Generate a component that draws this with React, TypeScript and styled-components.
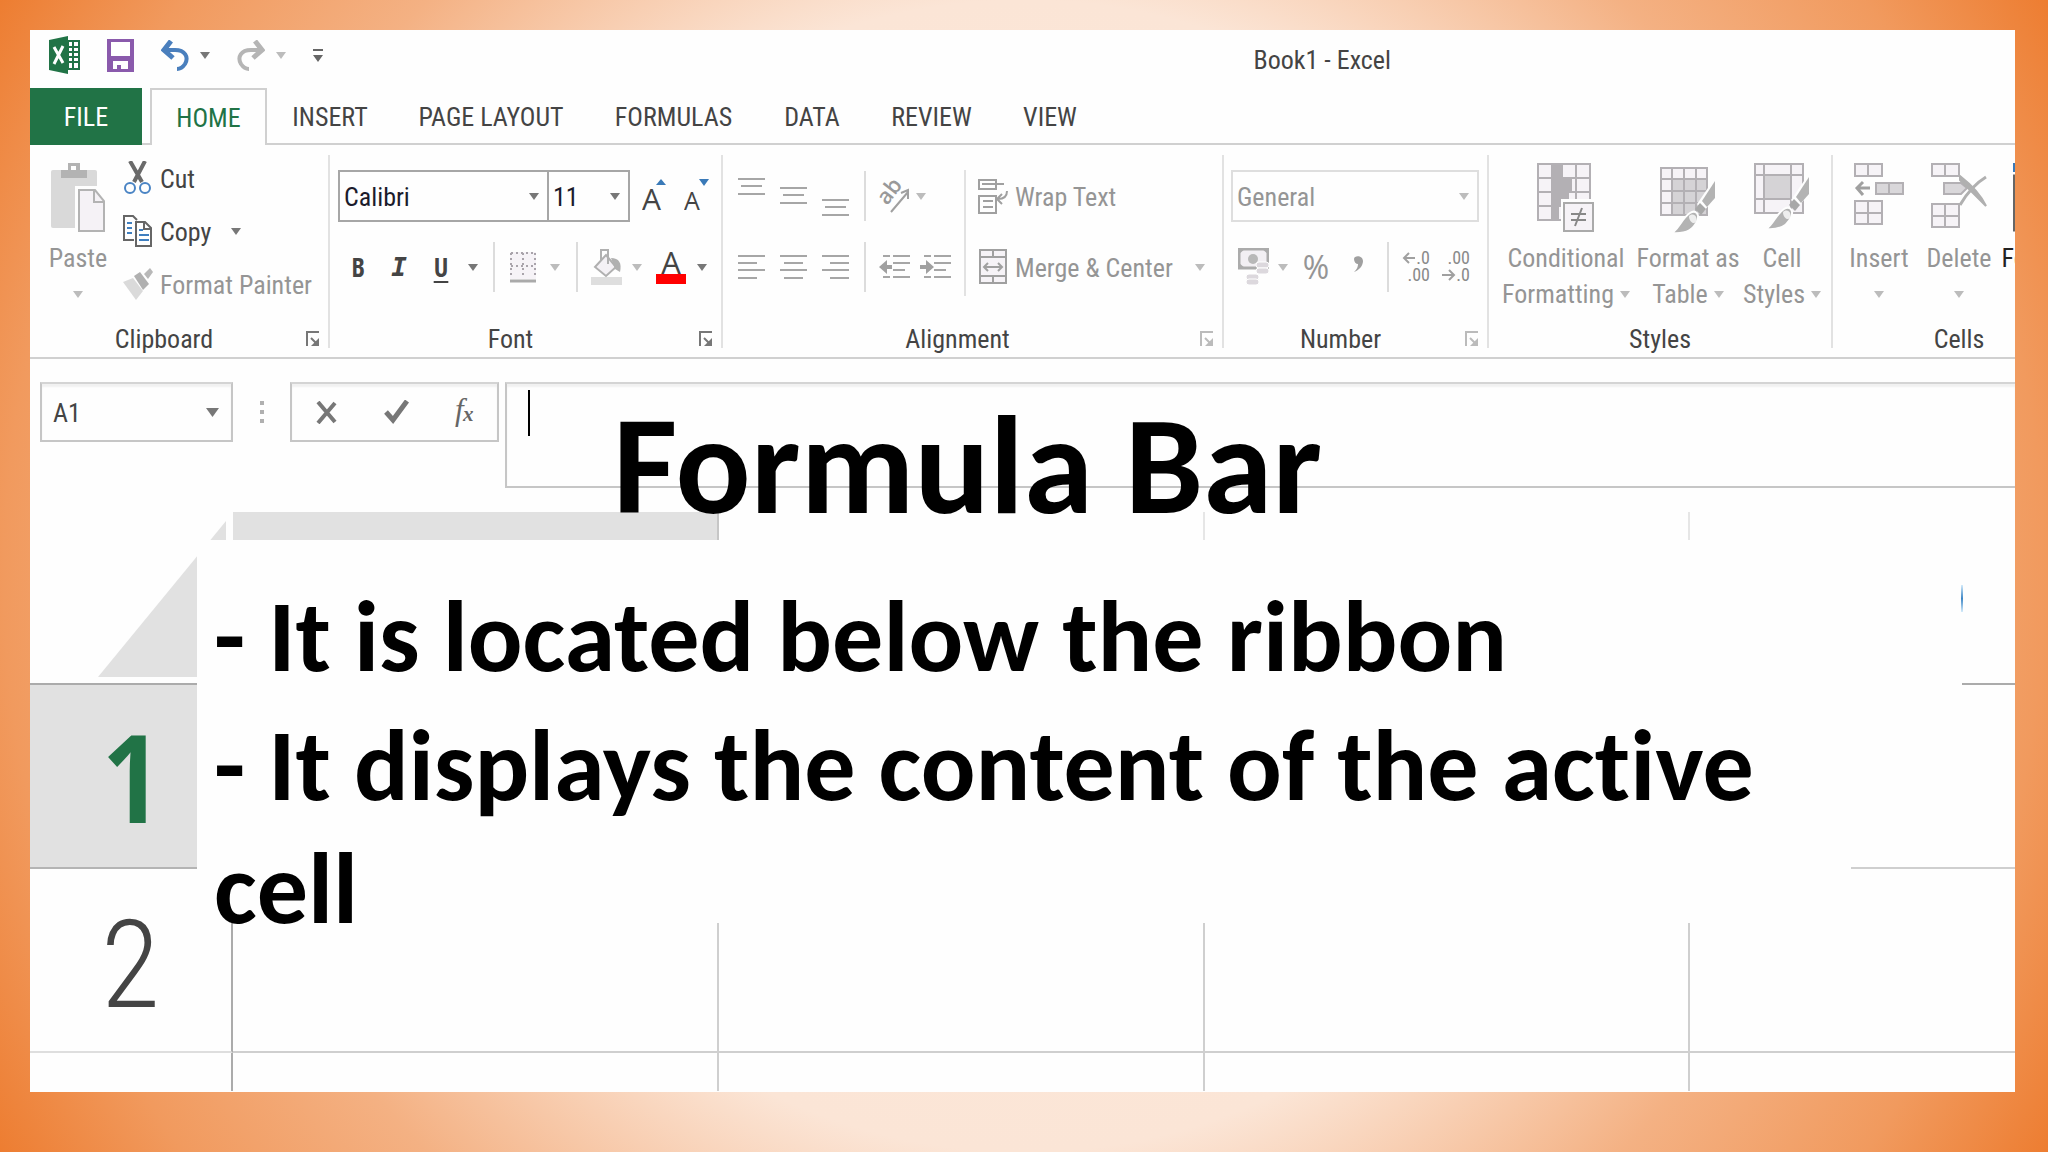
import React from 'react';
import styled, { createGlobalStyle, css } from 'styled-components';

const ink = '#444444';
const faded = '#959595';
const line = '#d0d0d0';
const green = '#217346';
const uiFont = '"Roboto Condensed", "Open Sans Condensed", "Open Sans", sans-serif';

const GlobalStyle = createGlobalStyle`
  *, *::before, *::after { box-sizing: border-box; }
  body { margin: 0; }
  button, select, textarea, input { font: inherit; color: inherit; }
  svg { display: block; flex: none; }
`;

/* ---------- frame ---------- */

const Frame = styled.div`
  display: flex;
  min-height: 100vh;
  padding: 30px 33px 60px 30px;
  background: radial-gradient(circle at 50% 50%, #fdeadd 0, #fbe5d6 576px, #f4b183 830px, #f19a5e 1020px, #ed7d31 1175px);
`;

const Window = styled.main`
  position: relative;
  display: flex;
  flex-direction: column;
  flex: 1;
  min-width: 0;
  overflow: hidden;
  background: #fefefe;
  color: ${ink};
  font: 400 26px/36px ${uiFont};
`;

/* ---------- title bar ---------- */

const TitleBar = styled.header`
  display: flex;
  align-items: flex-start;
  height: 58px;
  padding: 0 19px;
`;

const QuickAccess = styled.div`
  display: flex;
  align-items: center;
  gap: 27px;
  height: 50px;
`;

const QuickPair = styled.div`
  display: flex;
  align-items: center;
  gap: 11px;
`;

const Title = styled.div`
  margin: 0 605px 0 auto;
  line-height: 60px;
  white-space: nowrap;
`;

const Plain = styled.button`
  display: flex;
  align-items: center;
  justify-content: center;
  padding: 0;
  border: 0;
  background: none;
  white-space: nowrap;
`;

/* ---------- tabs ---------- */

const Tabs = styled.nav`
  display: flex;
  height: 57px;
  border-bottom: 2px solid ${line};
`;

const Tab = styled(Plain)<{ $w: number; $kind?: 'file' | 'active' }>`
  flex: none;
  width: ${p => p.$w}px;
  height: 57px;
  ${p => p.$kind === 'file' && css`
    margin-right: 8px;
    background: ${green};
    color: #ffffff;
  `}
  ${p => p.$kind === 'active' && css`
    border: 2px solid ${line};
    border-bottom: 0;
    background: #fefefe;
    color: ${green};
  `}
`;

/* ---------- ribbon ---------- */

const Ribbon = styled.div`
  display: flex;
  height: 214px;
  padding: 10px 0 9px;
  border-bottom: 2px solid ${line};
`;

const Group = styled.section<{ $w: number }>`
  display: flex;
  flex-direction: column;
  flex: none;
  width: ${p => p.$w}px;
  border-right: 2px solid #e2e2e2;
`;

const GroupBody = styled.div<{ $left: number; $top?: number }>`
  display: flex;
  flex: 1;
  align-items: flex-start;
  padding: ${p => p.$top ?? 15}px 0 0 ${p => p.$left}px;
`;

const GroupFooter = styled.div`
  display: flex;
  align-items: center;
  height: 18px;
`;

const GroupName = styled.div`
  flex: 1;
  text-align: center;
`;

const Launcher = styled(Plain)`
  width: 30px;
  height: 18px;
`;

const Stack = styled.div<{ $w?: number }>`
  display: flex;
  flex-direction: column;
  gap: 19px;
  width: ${p => (p.$w ? `${p.$w}px` : 'auto')};
`;

const ToolRow = styled.div`
  display: flex;
  align-items: center;
  height: 52px;
`;

const Tool = styled(Plain)<{ $w: number; $faded?: boolean }>`
  flex: none;
  width: ${p => p.$w}px;
  height: 50px;
  color: ${p => (p.$faded ? faded : ink)};
`;

const Percent = styled.span`
  font-family: "Open Sans", sans-serif;
  font-size: 32px;
`;

const Letter = styled.span<{ $style: 'b' | 'i' | 'u' }>`
  font-family: "Open Sans Condensed", "Open Sans", sans-serif;
  font-weight: 700;
  ${p => p.$style === 'i' && css`font-family: "DejaVu Sans Mono", monospace; font-style: italic;`}
  ${p => p.$style === 'u' && css`text-decoration: underline; text-decoration-thickness: 2px; text-underline-offset: 4px;`}
`;

const Separator = styled.div<{ $w: number }>`
  flex: none;
  width: ${p => p.$w}px;
  height: 50px;
  background: linear-gradient(#dcdcdc, #dcdcdc) center / 2px 100% no-repeat;
`;

const LongSeparator = styled.div`
  width: 2px;
  height: 126px;
  background: #e2e2e2;
`;

const Picker = styled.label<{ $w: number; $faded?: boolean }>`
  display: grid;
  align-items: center;
  flex: none;
  width: ${p => p.$w}px;
  height: 52px;
  border: 2px solid ${p => (p.$faded ? '#dedede' : '#a6a6a6')};
  color: ${p => (p.$faded ? faded : '#1b1b2b')};
  & + & { border-left: 0; }
  > * { grid-area: 1 / 1; }
  > svg { justify-self: end; margin-right: 8px; pointer-events: none; }
`;

const Select = styled.select`
  width: 100%;
  height: 100%;
  padding: 2px 4px 0;
  border: 0;
  appearance: none;
  background: none;
`;

const Wide = styled(Plain)<{ $faded?: boolean; $h?: number }>`
  justify-content: flex-start;
  gap: 7px;
  height: ${p => p.$h ?? 52}px;
  color: ${p => (p.$faded ? faded : ink)};
`;

const IconSlot = styled.span`
  display: flex;
  justify-content: center;
  width: 30px;
`;

const WideText = styled.span<{ $w?: number }>`
  min-width: ${p => p.$w ?? 0}px;
  padding-top: 2px;
  text-align: left;
`;

const Clip = styled.div`
  display: flex;
  flex-direction: column;
  gap: 7px;
  padding-left: 12px;
`;

const Big = styled(Plain)<{ $w: number; $dark?: boolean }>`
  flex-direction: column;
  justify-content: flex-start;
  flex: none;
  width: ${p => p.$w}px;
  padding-top: 8px;
  color: ${p => (p.$dark ? '#222222' : faded)};
`;

const BigIcon = styled.span`
  display: flex;
  height: 77px;
`;

const BigLine = styled.span`
  display: flex;
  align-items: center;
  justify-content: center;
  gap: 6px;
  height: 36px;
`;

/* ---------- formula bar ---------- */

const FormulaRow = styled.div`
  display: flex;
  align-items: flex-start;
  height: 153px;
  padding: 23px 0 0 10px;
`;

const box = css`
  border: 2px solid #c6c6c6;
  border-top-color: #d4d4d4;
  box-shadow: inset 0 3px 2px #f1f1f1;
`;

const NameBox = styled.label`
  ${box}
  display: grid;
  align-items: center;
  width: 193px;
  height: 60px;
  > * { grid-area: 1 / 1; }
  > svg { justify-self: end; margin-right: 12px; }
`;

const NameInput = styled.input`
  width: 100%;
  padding: 2px 11px 0;
  border: 0;
  background: none;
`;

const Dots = styled.div`
  display: flex;
  flex-direction: column;
  align-items: center;
  justify-content: center;
  gap: 5px;
  width: 57px;
  height: 60px;
`;

const Dot = styled.span`
  width: 4px;
  height: 4px;
  background: #b0b0b0;
`;

const Entry = styled.div`
  ${box}
  display: flex;
  align-items: center;
  justify-content: center;
  width: 209px;
  height: 60px;
  margin-right: 6px;
`;

const FormulaField = styled.div`
  ${box}
  display: flex;
  flex: 1;
  height: 106px;
  padding: 6px 0 0 21px;
  border-right: 0;
`;

const Caret = styled.span`
  width: 2px;
  height: 46px;
  background: #000000;
`;

const FormulaInput = styled.textarea`
  flex: 1;
  border: 0;
  padding: 0;
  resize: none;
  outline: 0;
  background: none;
`;

/* ---------- sheet ---------- */

const SheetArea = styled.div`
  position: relative;
  flex: 1;
  overflow: hidden;
`;

const Sheet = styled.table`
  width: 2146px;
  table-layout: fixed;
  border-collapse: separate;
  border-spacing: 0;
`;

const Corner = styled.th`
  width: 203px;
  height: 173px;
  padding: 0 7px 6px 0;
  border-bottom: 2px solid #ababab;
  vertical-align: bottom;
  > svg { margin-left: auto; }
`;

const ColumnHead = styled.th<{ $active?: boolean }>`
  padding: 0;
  border-right: 2px solid ${p => (p.$active ? '#c6c6c6' : '#e6e6e6')};
  border-bottom: 2px solid #ababab;
  background: ${p => (p.$active ? '#e1e1e1' : 'none')};
`;

const RowHead = styled.th<{ $active?: boolean }>`
  height: 184px;
  padding: ${p => (p.$active ? 0 : 12)}px 0 0;
  border-right: 2px solid #ababab;
  border-bottom: 2px solid ${p => (p.$active ? '#b4b4b4' : '#dedede')};
  background: ${p => (p.$active ? '#e1e1e1' : 'none')};
  color: ${p => (p.$active ? green : ink)};
  font-family: ${p => (p.$active ? '"Open Sans Condensed", "Open Sans", sans-serif' : '"Roboto Condensed", sans-serif')};
  font-size: 122px;
  font-weight: ${p => (p.$active ? 700 : 300)};
  line-height: 1;
`;

const Cell = styled.td`
  padding: 0;
  border-right: 2px solid #cfcfcf;
  border-bottom: 2px solid #cfcfcf;
`;

const PartialRow = styled.tr`
  height: 38px;
  > * { border-bottom: 0; }
`;

const PartialHead = styled.th`
  padding: 0;
  border-right: 2px solid #ababab;
`;

/* ---------- slide captions lying over the sheet ---------- */

const Heading = styled.h1`
  position: absolute;
  top: 352px;
  left: 583px;
  margin: 0;
  color: #000000;
  font: 700 140px/168px Carlito, Calibri, Lato, sans-serif;
  white-space: nowrap;
`;

const Notes = styled.div`
  position: absolute;
  top: 28px;
  left: 167px;
  color: #000000;
  font: 700 102px/123px Carlito, Calibri, Lato, sans-serif;
  font-variant-ligatures: none;
`;

const Note = styled.p<{ $w: number; $last?: boolean }>`
  width: ${p => p.$w}px;
  height: ${p => (p.$last ? 219 : 164)}px;
  margin: 0;
  padding: ${p => (p.$last ? 0 : 35)}px 0 0 17px;
  background: #fefefe;
`;

const LetterEdge = styled.span`
  position: absolute;
  top: 73px;
  left: 1931px;
  width: 2px;
  height: 27px;
  background: linear-gradient(#d5ecfb, #3d86c6, #d5ecfb);
`;

/* ---------- icons ---------- */

const Arrow = ({ c = '#777777', w = 10, h = 7 }: { c?: string; w?: number; h?: number }) => (
  <svg width={w} height={h} viewBox="0 0 10 7" preserveAspectRatio="none"><path d="M0 0H10L5 7Z" fill={c} /></svg>
);
const fadedArrow = '#bcbcbc';

const ExcelLogo = () => (
  <svg width="31" height="38" viewBox="0 0 31 38">
    <path d="M19 5H30V33H19Z" fill="#fff" stroke={green} strokeWidth="2" />
    <path d="M19 11H29M19 16H29M19 21H29M19 26H29M24 6V32" stroke={green} strokeWidth="2" />
    <path d="M0 4L19 0V38L0 34Z" fill={green} />
    <path d="M5 11L14 27M14 10L5 28" stroke="#fff" strokeWidth="3" />
  </svg>
);

const SaveIcon = () => (
  <svg width="27" height="33" viewBox="0 0 27 33">
    <path d="M0 0H27V33H0Z" fill="#8a5aac" />
    <path d="M4 3H23V17H4ZM6 22H21V30H14V26H10V30H6Z" fill="#fff" />
  </svg>
);

const UndoIcon = ({ c, flip }: { c: string; flip?: boolean }) => (
  <svg width="28" height="31" viewBox="0 0 28 31">
    <g transform={flip ? 'translate(28 0) scale(-1 1)' : undefined} fill="none" stroke={c}>
      <path d="M4 10H14C24 10 28 17 24 24C22 27 19 29 16 29" strokeWidth="4" />
      <path d="M10 1L3 10L12 18" strokeWidth="5" />
    </g>
  </svg>
);

const CustomizeIcon = () => (
  <svg width="10" height="13" viewBox="0 0 10 13"><path d="M0 0H10V2H0ZM0 6H10L5 13Z" fill="#666" /></svg>
);

const LauncherIcon = ({ c }: { c: string }) => (
  <svg width="14" height="16" viewBox="0 0 14 16">
    <path d="M1 15V1H13M5 7L11 13" fill="none" stroke={c} strokeWidth="2" />
    <path d="M13 7V15H5Z" fill={c} />
  </svg>
);

const PasteIcon = () => (
  <svg width="54" height="70" viewBox="0 0 54 70">
    <rect x="0" y="7" width="46" height="58" rx="2" fill="#d9d9d9" />
    <path d="M10 7H17V0H29V7H36V15H10Z" fill="#b3b3b3" />
    <rect x="20" y="3" width="5" height="4" fill="#fff" />
    <path d="M24 23H46L56 33V70H24Z" fill="#fefefe" />
    <path d="M28 27H44L53 38V68H28Z" fill="#f5f2f6" stroke="#b3b3b3" strokeWidth="2" />
    <path d="M43 27V39H53" fill="none" stroke="#b3b3b3" strokeWidth="2" />
  </svg>
);

const CutIcon = () => (
  <svg width="28" height="34" viewBox="0 0 28 34">
    <path d="M6 0L18 21M21 0L10 21" stroke="#6a6a6a" strokeWidth="4" />
    <circle cx="6" cy="27" r="5" fill="none" stroke="#4a84c4" strokeWidth="2" />
    <circle cx="21" cy="27" r="5" fill="none" stroke="#4a84c4" strokeWidth="2" />
  </svg>
);

const CopyIcon = () => (
  <svg width="30" height="33" viewBox="0 0 30 33">
    <path d="M11 25H1V1H10L14 5" fill="none" stroke="#666" strokeWidth="2" />
    <path d="M4 8H9M4 13H9M4 18H9" stroke="#3f7fc0" strokeWidth="2" />
    <path d="M13 7H22L28 13V31H13Z" fill="#fff" stroke="#666" strokeWidth="2" />
    <path d="M21 7V14H28" fill="none" stroke="#666" strokeWidth="2" />
    <path d="M16 15H20M16 20H26M16 25H26" stroke="#3f7fc0" strokeWidth="2" />
  </svg>
);

const PainterIcon = () => (
  <svg width="30" height="32" viewBox="0 0 30 32">
    <path d="M0 14L10 10L20 23L13 32Z" fill="#dadada" />
    <path d="M11 8L17 4L26 16L20 22Z" fill="#b0b0b0" />
    <path d="M21 6L27 0L30 4L25 11Z" fill="#b8b8b8" />
  </svg>
);

const FontSizeIcon = ({ grow }: { grow?: boolean }) => (
  <svg width="26" height="52" viewBox="0 0 26 52">
    <text x="0" y="40" fontFamily="Open Sans" fontSize={grow ? 30 : 25} fill="#444">A</text>
    {grow ? <path d="M14 15H24L19 9Z" fill="#3a7ab8" /> : <path d="M15 9H25L20 16Z" fill="#3a7ab8" />}
  </svg>
);

const BorderIcon = () => (
  <svg width="26" height="31" viewBox="0 0 26 31">
    <rect width="26" height="27" fill="#f6f3f7" />
    <path d="M1 1H25M1 14H25M1 1V26M13 1V26M25 1V26" stroke="#a9a4ab" strokeWidth="2" strokeDasharray="2 3" />
    <path d="M0 29H26" stroke="#aaa" strokeWidth="3" />
  </svg>
);

const BucketIcon = () => (
  <svg width="31" height="36" viewBox="0 0 31 36">
    <path d="M4 18L15 6L25 18L15 27Z" fill="#f4f1f5" stroke="#b0b0b0" strokeWidth="2" />
    <path d="M10 12V1H17V15" fill="none" stroke="#b0b0b0" strokeWidth="2" />
    <path d="M20 9C28 9 31 14 29 23L24 20Z" fill="#b0b0b0" />
    <rect y="28" width="31" height="8" fill="#dedede" />
  </svg>
);

const FontColorIcon = () => (
  <svg width="30" height="34" viewBox="0 0 30 34">
    <text x="15" y="24" textAnchor="middle" fontFamily="Open Sans" fontSize="31" fill="#444">A</text>
    <rect y="24" width="30" height="10" fill="#ff0000" />
  </svg>
);

/* Each stroke is [y, left, right] on a 27px wide canvas. */
const Strokes = ({ rows }: { rows: number[][] }) => (
  <svg width="27" height="50" viewBox="0 0 27 50">
    {rows.map(([y, a, b]) => <path key={y} d={`M${a} ${y}H${b}`} stroke="#a6a6a6" strokeWidth="2" />)}
  </svg>
);
const top3 = [[8, 0, 27], [15, 3, 24], [23, 0, 27]];
const mid3 = [[17, 0, 27], [24, 3, 24], [32, 0, 27]];
const low3 = [[29, 0, 27], [36, 3, 24], [44, 0, 27]];
const left4 = [[14, 0, 27], [21, 0, 19], [28, 0, 27], [36, 0, 19]];
const center4 = [[14, 0, 27], [21, 4, 23], [28, 0, 27], [36, 4, 23]];
const right4 = [[14, 0, 27], [21, 8, 27], [28, 0, 27], [36, 8, 27]];

const IndentIcon = ({ more }: { more?: boolean }) => (
  <svg width="31" height="24" viewBox="0 0 31 24">
    <path d="M4 1H11M14 1H31M14 8H31M14 15H26M4 22H11M14 22H31" stroke="#a6a6a6" strokeWidth="2" />
    {more
      ? <path d="M0 10H6V5L14 12L6 19V14H0Z" fill="#a0a0a0" />
      : <path d="M13 10H8V5L0 12L8 19V14H13Z" fill="#a0a0a0" />}
  </svg>
);

const OrientationIcon = () => (
  <svg width="32" height="36" viewBox="0 0 32 36">
    <text transform="translate(9 28) rotate(-52)" fontFamily="Open Sans" fontWeight="600" fontSize="22" fill="#999">ab</text>
    <path d="M13 34L30 14M23 15L30 12V21" fill="none" stroke="#a0a0a0" strokeWidth="2" />
  </svg>
);

const WrapIcon = () => (
  <svg width="30" height="35" viewBox="0 0 30 35">
    <path d="M1 1H18V10H1ZM4 5H26M1 17H18V34H1ZM5 22H15M5 28H15" fill="none" stroke="#a0a0a0" strokeWidth="2" />
    <path d="M29 12C29 17 26 20 20 20M24 15L19 20L24 25" fill="none" stroke="#a0a0a0" strokeWidth="2" />
  </svg>
);

const MergeIcon = () => (
  <svg width="28" height="36" viewBox="0 0 28 36">
    <path d="M1 1H27V34H1ZM1 8H27M1 27H27M14 1V8M14 27V34" fill="#f6f3f7" stroke="#a0a0a0" strokeWidth="2" />
    <path d="M5 18H23M9 14L5 18L9 22M19 14L23 18L19 22" fill="none" stroke="#a0a0a0" strokeWidth="2" />
  </svg>
);

const MoneyIcon = () => (
  <svg width="31" height="38" viewBox="0 0 31 38">
    <path d="M1 1H30V20H1Z" fill="#f2eff3" stroke="#ababab" strokeWidth="3" />
    <path d="M0 0H8L0 7ZM31 0H23L31 7ZM0 21V14L8 21Z" fill="#ababab" />
    <circle cx="15" cy="11" r="5" fill="#b8b8b8" />
    <g fill="#dcd8dd" stroke="#fefefe"><rect x="18" y="14" width="13" height="6" rx="3" /><rect x="18" y="20" width="13" height="6" rx="3" /><rect x="8" y="26" width="13" height="6" rx="3" /><rect x="8" y="31" width="13" height="6" rx="3" /></g>
  </svg>
);

const CommaIcon = () => (
  <svg width="11" height="24" viewBox="0 0 11 24"><path d="M1 4C1 0 10 0 10 6C10 11 6 15 1 17C4 14 5 12 5 9C3 9 1 7 1 4Z" fill="#a0a0a0" /></svg>
);

const DecimalIcon = ({ more }: { more?: boolean }) => (
  <svg width="28" height="34" viewBox="0 0 28 34">
    <g fontFamily={uiFont} fontSize="18" fill="#8a8a8a" textAnchor="end">
      <text x="28" y="14">{more ? '.0' : '.00'}</text>
      <text x="28" y="31">{more ? '.00' : '.0'}</text>
    </g>
    {more
      ? <path d="M13 8H2M7 3L2 8L7 13" fill="none" stroke="#a0a0a0" strokeWidth="2" />
      : <path d="M0 25H11M7 20L12 25L7 30" fill="none" stroke="#a0a0a0" strokeWidth="2" />}
  </svg>
);

const ConditionalIcon = () => (
  <svg width="58" height="70" viewBox="0 0 58 70">
    <rect x="1" y="1" width="52" height="56" fill="#f6f3f7" />
    <path d="M15 1H26V15H15ZM15 16H35V29H15ZM15 30H32V43H15ZM15 44H22V57H15Z" fill="#b3b0b4" />
    <path d="M1 1H53V57H1ZM1 15H53M1 29H53M1 43H53M15 1V57M39 1V43" fill="none" stroke="#b3b0b4" strokeWidth="2" />
    <rect x="24" y="36" width="34" height="34" fill="#fefefe" />
    <rect x="27" y="40" width="29" height="28" fill="#f6f3f7" stroke="#aaa" strokeWidth="2" />
    <path d="M34 51H49M34 57H49M45 45L38 63" stroke="#888" strokeWidth="2" />
  </svg>
);

const Brush = () => (
  <g>
    <path d="M55 12L50 18L37 37L44 44L55 31Z" fill="#fefefe" />
    <path d="M55 14V31L47 40L42 34Z" fill="#b3b3b3" />
    <path d="M40 36L46 42L41 48L35 42Z" fill="#a8a8a8" />
    <path d="M30 46C36 42 40 48 37 54C33 64 24 67 12 66C20 61 21 52 30 46Z" fill="#b3b3b3" stroke="#fefefe" strokeWidth="2" />
    <path d="M29 49C34 45 38 50 36 55C33 58 29 54 29 49Z" fill="#eeeeee" />
  </g>
);

const TableIcon = () => (
  <svg width="56" height="70" viewBox="0 0 56 70">
    <g transform="translate(0 4)">
      <rect x="1" y="1" width="46" height="47" fill="#f6f3f7" />
      <path d="M12 13H47V48H12Z" fill="#d5d3d6" />
      <path d="M1 1H47V48H1ZM1 12H47M1 24H47M1 36H47M12 1V48M24 1V48M36 1V48" fill="none" stroke="#b3b0b4" strokeWidth="2" />
      <Brush />
    </g>
  </svg>
);

const CellStyleIcon = () => (
  <svg width="56" height="70" viewBox="0 0 56 70">
    <rect x="1" y="1" width="48" height="50" fill="#f6f3f7" />
    <path d="M10 13H37V36H10Z" fill="#d5d3d6" />
    <path d="M1 1H49V50H1ZM1 12H49M1 36H49M10 1V50M37 1V50" fill="none" stroke="#b3b0b4" strokeWidth="2" />
    <Brush />
  </svg>
);

const InsertIcon = () => (
  <svg width="50" height="70" viewBox="0 0 50 70">
    <path d="M1 1H28V13H1ZM14 1V13M1 38H28V61H1ZM14 38V61M1 50H28" fill="#f6f3f7" stroke="#b3b0b4" strokeWidth="2" />
    <path d="M22 20H49V31H22ZM35 20V31" fill="#d9d7da" stroke="#b3b0b4" strokeWidth="2" />
    <path d="M16 25H4M9 19L3 25L9 32" fill="none" stroke="#a0a0a0" strokeWidth="3" />
  </svg>
);

const DeleteIcon = () => (
  <svg width="56" height="70" viewBox="0 0 56 70">
    <path d="M1 1H28V13H1ZM14 1V13M1 41H28V64H1ZM14 41V64M1 53H28" fill="#f6f3f7" stroke="#b3b0b4" strokeWidth="2" />
    <path d="M13 20H30L36 25L30 31H13Z" fill="#d9d7da" stroke="#b3b0b4" strokeWidth="2" />
    <path d="M29 13C38 20 49 30 55 43C46 34 38 26 29 17Z" fill="#b0b0b0" stroke="#b0b0b0" strokeWidth="2" />
    <path d="M55 14C45 20 36 30 29 42" fill="none" stroke="#b0b0b0" strokeWidth="3" />
  </svg>
);

const FormatIcon = () => (
  <svg width="50" height="70" viewBox="0 0 50 70">
    <rect width="50" height="9" fill="#3a7ab8" />
    <rect x="1" y="13" width="48" height="54" fill="#fff" stroke="#666" strokeWidth="3" />
  </svg>
);

const CancelIcon = () => (
  <svg width="21" height="23" viewBox="0 0 21 23"><path d="M2 1L19 21M19 2L2 22" stroke="#777" strokeWidth="4" /></svg>
);
const EnterIcon = () => (
  <svg width="25" height="24" viewBox="0 0 25 24"><path d="M2 12L9 20L23 1" fill="none" stroke="#777" strokeWidth="5" /></svg>
);
const FxIcon = () => (
  <svg width="28" height="32" viewBox="0 0 28 32">
    <text x="4" y="24" fontFamily="Liberation Serif" fontStyle="italic" fontSize="31" fill="#666">f</text>
    <text x="12" y="25" fontFamily="Liberation Serif" fontStyle="italic" fontWeight="700" fontSize="21" fill="#666">x</text>
  </svg>
);

/* ---------- page ---------- */

const tabs: [string, number][] = [
  ['INSERT', 126], ['PAGE LAYOUT', 196], ['FORMULAS', 169], ['DATA', 108], ['REVIEW', 131], ['VIEW', 106],
];

export default function App() {
  return (
    <Frame>
      <GlobalStyle />
      <Window>
        <TitleBar>
          <QuickAccess>
            <ExcelLogo />
            <Plain aria-label="Save"><SaveIcon /></Plain>
            <QuickPair>
              <Plain aria-label="Undo"><UndoIcon c="#4a7fbd" /></Plain>
              <Plain aria-label="Undo history"><Arrow /></Plain>
            </QuickPair>
            <QuickPair>
              <Plain aria-label="Redo"><UndoIcon c="#b5b5b5" flip /></Plain>
              <Plain aria-label="Redo history"><Arrow c={fadedArrow} /></Plain>
            </QuickPair>
            <Plain aria-label="Customize toolbar"><CustomizeIcon /></Plain>
          </QuickAccess>
          <Title>Book1 - Excel</Title>
        </TitleBar>

        <Tabs>
          <Tab $w={112} $kind="file">FILE</Tab>
          <Tab $w={117} $kind="active">HOME</Tab>
          {tabs.map(([name, w]) => <Tab key={name} $w={w}>{name}</Tab>)}
        </Tabs>

        <Ribbon>
          <Group $w={300}>
            <GroupBody $left={15} $top={0}>
              <Big $w={66}>
                <BigIcon><PasteIcon /></BigIcon>
                <BigLine>Paste</BigLine>
                <BigLine><Arrow c={fadedArrow} /></BigLine>
              </Big>
              <Clip>
                <Wide $h={46}><IconSlot><CutIcon /></IconSlot><WideText>Cut</WideText></Wide>
                <Wide $h={46}><IconSlot><CopyIcon /></IconSlot><WideText $w={64}>Copy</WideText><Arrow /></Wide>
                <Wide $h={46} $faded><IconSlot><PainterIcon /></IconSlot><WideText>Format Painter</WideText></Wide>
              </Clip>
            </GroupBody>
            <GroupFooter><GroupName>Clipboard</GroupName><Launcher aria-label="Clipboard options"><LauncherIcon c="#777" /></Launcher></GroupFooter>
          </Group>

          <Group $w={393}>
            <GroupBody $left={8}>
              <Stack>
                <ToolRow>
                  <Picker $w={211}><Select aria-label="Font"><option>Calibri</option></Select><Arrow /></Picker>
                  <Picker $w={81}><Select aria-label="Font size"><option>11</option></Select><Arrow /></Picker>
                  <Tool $w={50} aria-label="Increase font size"><FontSizeIcon grow /></Tool>
                  <Tool $w={34} aria-label="Decrease font size"><FontSizeIcon /></Tool>
                </ToolRow>
                <ToolRow>
                  <Tool $w={40}><Letter $style="b">B</Letter></Tool>
                  <Tool $w={42}><Letter $style="i">I</Letter></Tool>
                  <Tool $w={42}><Letter $style="u">U</Letter></Tool>
                  <Tool $w={22} aria-label="Underline styles"><Arrow /></Tool>
                  <Separator $w={20} />
                  <Tool $w={38} aria-label="Borders"><BorderIcon /></Tool>
                  <Tool $w={26} aria-label="Border styles"><Arrow c={fadedArrow} /></Tool>
                  <Separator $w={18} />
                  <Tool $w={40} aria-label="Fill color"><BucketIcon /></Tool>
                  <Tool $w={22} aria-label="Fill colors"><Arrow c={fadedArrow} /></Tool>
                  <Tool $w={46} aria-label="Font color"><FontColorIcon /></Tool>
                  <Tool $w={16} aria-label="Font colors"><Arrow /></Tool>
                </ToolRow>
              </Stack>
            </GroupBody>
            <GroupFooter><GroupName>Font</GroupName><Launcher aria-label="Font options"><LauncherIcon c="#777" /></Launcher></GroupFooter>
          </Group>

          <Group $w={501}>
            <GroupBody $left={7}>
              <Stack $w={234}>
                <ToolRow>
                  <Tool $w={42} aria-label="Top align"><Strokes rows={top3} /></Tool>
                  <Tool $w={42} aria-label="Middle align"><Strokes rows={mid3} /></Tool>
                  <Tool $w={42} aria-label="Bottom align"><Strokes rows={low3} /></Tool>
                  <Separator $w={18} />
                  <Tool $w={40} aria-label="Orientation"><OrientationIcon /></Tool>
                  <Tool $w={14} aria-label="Orientation styles"><Arrow c={fadedArrow} /></Tool>
                </ToolRow>
                <ToolRow>
                  <Tool $w={42} aria-label="Align left"><Strokes rows={left4} /></Tool>
                  <Tool $w={42} aria-label="Center"><Strokes rows={center4} /></Tool>
                  <Tool $w={42} aria-label="Align right"><Strokes rows={right4} /></Tool>
                  <Separator $w={18} />
                  <Tool $w={40} aria-label="Decrease indent"><IndentIcon /></Tool>
                  <Tool $w={42} aria-label="Increase indent"><IndentIcon more /></Tool>
                </ToolRow>
              </Stack>
              <LongSeparator />
              <GroupBody $left={12} $top={0}>
                <Stack>
                  <Wide $faded><IconSlot><WrapIcon /></IconSlot><WideText>Wrap Text</WideText></Wide>
                  <Wide $faded><IconSlot><MergeIcon /></IconSlot><WideText $w={173}>Merge &amp; Center</WideText><Arrow c={fadedArrow} /></Wide>
                </Stack>
              </GroupBody>
            </GroupBody>
            <GroupFooter><GroupName>Alignment</GroupName><Launcher aria-label="Alignment options"><LauncherIcon c="#bbb" /></Launcher></GroupFooter>
          </Group>

          <Group $w={265}>
            <GroupBody $left={7}>
              <Stack>
                <ToolRow>
                  <Picker $w={248} $faded><Select aria-label="Number format"><option>General</option></Select><Arrow c={fadedArrow} /></Picker>
                </ToolRow>
                <ToolRow>
                  <Tool $w={44} aria-label="Accounting format"><MoneyIcon /></Tool>
                  <Tool $w={16} aria-label="Currencies"><Arrow c={fadedArrow} /></Tool>
                  <Tool $w={50} $faded><Percent>%</Percent></Tool>
                  <Tool $w={34} aria-label="Comma style"><CommaIcon /></Tool>
                  <Separator $w={26} />
                  <Tool $w={30} aria-label="Increase decimal"><DecimalIcon more /></Tool>
                  <Tool $w={50} aria-label="Decrease decimal"><DecimalIcon /></Tool>
                </ToolRow>
              </Stack>
            </GroupBody>
            <GroupFooter><GroupName>Number</GroupName><Launcher aria-label="Number options"><LauncherIcon c="#bbb" /></Launcher></GroupFooter>
          </Group>

          <Group $w={344}>
            <GroupBody $left={12} $top={0}>
              <Big $w={130}>
                <BigIcon><ConditionalIcon /></BigIcon>
                <BigLine>Conditional</BigLine>
                <BigLine>Formatting<Arrow c={fadedArrow} /></BigLine>
              </Big>
              <Big $w={114}>
                <BigIcon><TableIcon /></BigIcon>
                <BigLine>Format as</BigLine>
                <BigLine>Table<Arrow c={fadedArrow} /></BigLine>
              </Big>
              <Big $w={74}>
                <BigIcon><CellStyleIcon /></BigIcon>
                <BigLine>Cell</BigLine>
                <BigLine>Styles<Arrow c={fadedArrow} /></BigLine>
              </Big>
            </GroupBody>
            <GroupFooter><GroupName>Styles</GroupName></GroupFooter>
          </Group>

          <Group $w={254}>
            <GroupBody $left={4} $top={0}>
              <Big $w={84}>
                <BigIcon><InsertIcon /></BigIcon>
                <BigLine>Insert</BigLine>
                <BigLine><Arrow c={fadedArrow} /></BigLine>
              </Big>
              <Big $w={76}>
                <BigIcon><DeleteIcon /></BigIcon>
                <BigLine>Delete</BigLine>
                <BigLine><Arrow c={fadedArrow} /></BigLine>
              </Big>
              <Big $w={82} $dark>
                <BigIcon><FormatIcon /></BigIcon>
                <BigLine>Format</BigLine>
                <BigLine><Arrow /></BigLine>
              </Big>
            </GroupBody>
            <GroupFooter><GroupName>Cells</GroupName></GroupFooter>
          </Group>
        </Ribbon>

        <FormulaRow>
          <NameBox><NameInput aria-label="Name box" defaultValue="A1" /><Arrow w={13} h={9} /></NameBox>
          <Dots><Dot /><Dot /><Dot /></Dots>
          <Entry>
            <Tool $w={68} aria-label="Cancel"><CancelIcon /></Tool>
            <Tool $w={72} aria-label="Enter"><EnterIcon /></Tool>
            <Tool $w={64} aria-label="Insert function"><FxIcon /></Tool>
          </Entry>
          <FormulaField><Caret /><FormulaInput aria-label="Formula bar" /></FormulaField>
        </FormulaRow>

        <SheetArea>
          <Sheet>
            <thead>
              <tr>
                <Corner><svg width="128" height="156" viewBox="0 0 128 156"><path d="M128 0V156H0Z" fill="#e1e1e1" /></svg></Corner>
                <ColumnHead $active /><ColumnHead /><ColumnHead /><ColumnHead />
              </tr>
            </thead>
            <tbody>
              <tr><RowHead $active>1</RowHead><Cell /><Cell /><Cell /><Cell /></tr>
              <tr><RowHead>2</RowHead><Cell /><Cell /><Cell /><Cell /></tr>
              <PartialRow><PartialHead /><Cell as="td" /><Cell /><Cell /><Cell /></PartialRow>
            </tbody>
          </Sheet>
          <Notes>
            <Note $w={1765}>- It is located below the ribbon</Note>
            <Note $w={1654} $last>- It displays the content of the active cell</Note>
          </Notes>
          <LetterEdge />
        </SheetArea>
        <Heading>Formula Bar</Heading>
      </Window>
    </Frame>
  );
}
